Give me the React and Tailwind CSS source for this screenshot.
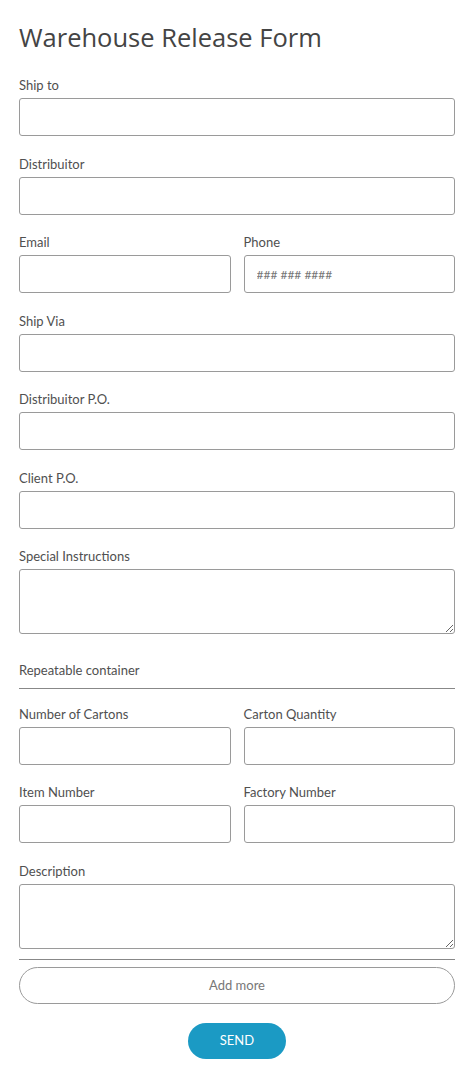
import React from "react";

const labelCls = "block text-[13px] leading-[16px] text-[#505050] mb-[5px]";
const inputCls = "block w-full h-[38px] border border-[#9a9a9a] rounded-[3px] bg-white px-3 text-[12px] text-[#555] placeholder:text-[#777] outline-none";
const areaCls = "block w-full h-[65px] border border-[#9a9a9a] rounded-[3px] bg-white px-3 py-2 text-[12px] outline-none";

function Field({ label, placeholder, area }) {
  return (
    <div className="min-w-0">
      <label className={labelCls}>{label}</label>
      {area ? (
        <textarea className={areaCls} />
      ) : (
        <input className={inputCls} placeholder={placeholder} />
      )}
    </div>
  );
}

export default function App() {
  return (
    <div className="w-[474px] min-h-[1078px] bg-white px-[19px] pt-[21px]" style={{ fontFamily: "Lato, 'Noto Sans', sans-serif" }}>
      <h1 className="text-[25.5px] leading-[32px] text-[#444] font-normal" style={{ fontFamily: "'Open Sans', 'Noto Sans', sans-serif" }}>
        Warehouse Release Form
      </h1>
      <div className="mt-[24px] flex flex-col gap-[19.5px]">
        <Field label="Ship to" />
        <Field label="Distribuitor" />
        <div className="grid grid-cols-2 gap-[13px]">
          <Field label="Email" />
          <Field label="Phone" placeholder="### ### ####" />
        </div>
        <Field label="Ship Via" />
        <Field label="Distribuitor P.O." />
        <Field label="Client P.O." />
        <Field label="Special Instructions" area />
      </div>
      <div className="mt-[28px] text-[13px] leading-[16px] text-[#505050]">Repeatable container</div>
      <div className="mt-[10px] border-t border-[#888]" />
      <div className="mt-[17px] flex flex-col gap-[19px]">
        <div className="grid grid-cols-2 gap-[13px]">
          <Field label="Number of Cartons" />
          <Field label="Carton Quantity" />
        </div>
        <div className="grid grid-cols-2 gap-[13px]">
          <Field label="Item Number" />
          <Field label="Factory Number" />
        </div>
        <div className="mt-[1px]">
          <Field label="Description" area />
        </div>
      </div>
      <div className="mt-[10px] border-t border-[#888]" />
      <button className="mt-[7px] w-full h-[37px] rounded-full border border-[#9a9a9a] bg-white text-[13px] text-[#777]">
        Add more
      </button>
      <div className="flex justify-center mt-[19px]">
        <button className="w-[98px] h-[36px] rounded-full bg-[#1b9ac4] text-white text-[13px]">SEND</button>
      </div>
    </div>
  );
}
